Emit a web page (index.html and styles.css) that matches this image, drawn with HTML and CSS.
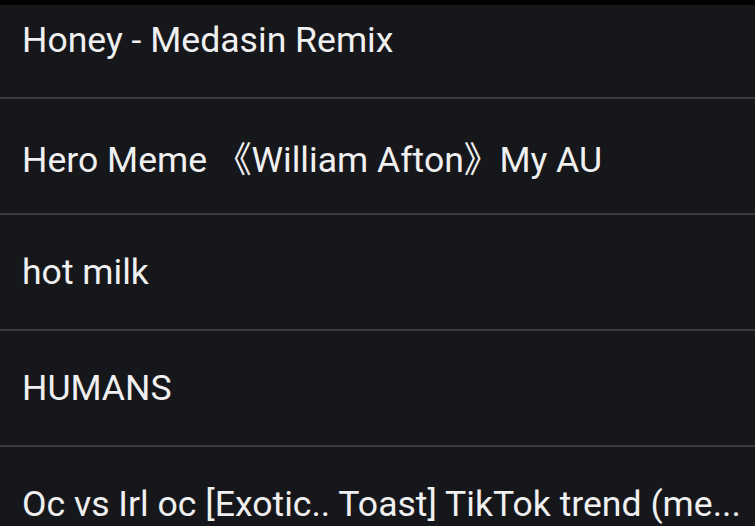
FILE: index.html
```html
<!DOCTYPE html>
<html>
<head>
<meta charset="utf-8">
<link rel="stylesheet" href="styles.css">
</head>
<body>
<div class="statusbar"></div>
<div class="viewport">
  <ul class="list">
    <li class="row"><span class="title">Honey - Medasin Remix</span></li>
    <li class="row"><span class="title">Hero Meme 《William Afton》My AU</span></li>
    <li class="row"><span class="title">hot milk</span></li>
    <li class="row"><span class="title">HUMANS</span></li>
    <li class="row"><span class="title">Oc vs Irl oc [Exotic.. Toast] TikTok trend (me...</span></li>
  </ul>
</div>
</body>
</html>
```
FILE: styles.css
```css
html, body {
  margin: 0;
  padding: 0;
  background: #16171b;
  height: 100%;
  overflow: hidden;
}
body {
  font-family: Roboto, "Noto Sans CJK SC", sans-serif;
  color: #f0f0f0;
  display: flex;
  flex-direction: column;
}
.statusbar {
  height: 5px;
  background: #030304;
  flex: none;
}
.viewport {
  flex: 1;
  overflow: hidden;
}
.list {
  list-style: none;
  margin: -22px 0 0 0;
  padding: 0;
}
.row {
  height: 114px;
  border-bottom: 2px solid #3a3b3f;
  display: flex;
  align-items: center;
  padding: 0 4px 0 22px;
}
.title {
  font-size: 35.6px;
  white-space: nowrap;
  overflow: hidden;
  text-overflow: ellipsis;
}
```
